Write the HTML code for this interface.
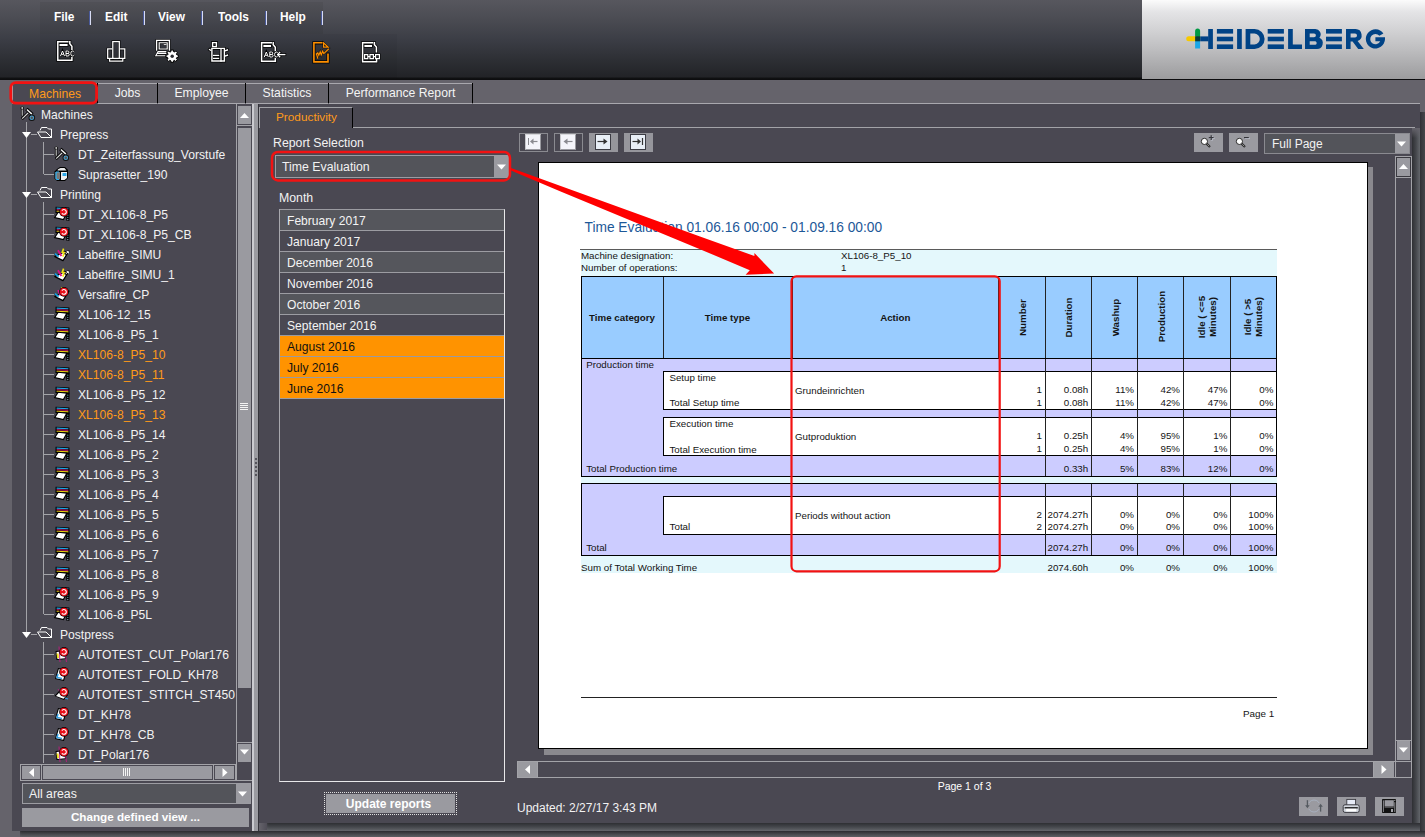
<!DOCTYPE html>
<html><head><meta charset="utf-8"><style>
*{margin:0;padding:0;box-sizing:border-box}
html,body{width:1425px;height:837px;overflow:hidden}
body{position:relative;background:#65636b;font-family:"Liberation Sans",sans-serif;font-size:12px;color:#fff}
.a{position:absolute}
.t{position:absolute;white-space:nowrap;line-height:1}
svg{position:absolute;overflow:visible}
#hdr{left:0;top:0;width:1425px;height:80px;background:linear-gradient(#57575e,#4a4b52 25%,#3b3d45 50%,#2d2f34 75%,#222327 96.2%,#101112 97.6%,#0c0c0e)}
#logo{left:1142px;top:0;width:283px;height:79px;background:linear-gradient(#fbfbfb 0%,#e4e4e6 15%,#d2d2d4 38%,#bebec0 62%,#a9a9ab 85%,#9c9c9e 100%)}
.menu{font-weight:bold;font-size:11.9px;color:#fff;top:10.6px;transform:scale(1,1.1);transform-origin:0 0}
.msep{top:11px;width:2px;height:14px;background:linear-gradient(90deg,#4a5a9a 50%,#d8dcf4 50%)}
.tab{top:83px;height:21px;background:#65636b;border-top:1px solid #a9a8ae;border-bottom:1px solid #a9a8ae;text-align:center;font-size:12.2px;line-height:19px;color:#f4f4f4}
.tsep{top:83px;width:1px;height:20px;background:#000}
.panel{background:#4a4852}
.tr{font-size:12.1px;color:#f2f2f2}
.org{color:#ff9a1a}
.ln{background:#a3a3a8}
.month{left:280px;width:224px;height:21px;border-top:1px solid #9c9ca2;font-size:12.1px;line-height:22px;padding-left:7px;color:#f4f4f4}
.m1{background:#55565c}
.m2{background:#4a4852}
.msel{background:#ff9300;color:#111;border-top-color:#9a9aa0}
.gbtn{background:#9a9aa0}
.r{position:absolute;white-space:nowrap;line-height:1;color:#141414;font-size:9.6px}
</style></head><body>
<div id="hdr" class="a"></div>
<div class="a" style="left:40px;top:2px;width:283px;height:32px;background:rgba(0,0,0,0.06)"></div>
<div class="a" style="left:40px;top:34px;width:357px;height:44px;background:rgba(0,0,0,0.04)"></div>
<div class="t menu" style="left:54px">File</div><div class="a msep" style="left:89px"></div>
<div class="t menu" style="left:105px">Edit</div><div class="a msep" style="left:142.5px"></div>
<div class="t menu" style="left:158px">View</div><div class="a msep" style="left:201px"></div>
<div class="t menu" style="left:218px">Tools</div><div class="a msep" style="left:265px"></div>
<div class="t menu" style="left:280px">Help</div><div class="a msep" style="left:321px"></div>
<svg style="left:0;top:0" width="400" height="80"><path d="M67.8 41.7 H57.8 V60.3 H71.9 V57 M69.8 41.7 V43.8 L71.9 46.2 V49.8" stroke="#000" stroke-width="3.1" fill="none" stroke-linejoin="miter" stroke-linecap="square" opacity="0.85"/><path d="M60.5 45 H66.6" stroke="#000" stroke-width="3.6" fill="none" stroke-linejoin="miter" stroke-linecap="square" opacity="0.85"/><path d="M67.8 41.7 H57.8 V60.3 H71.9 V57 M69.8 41.7 V43.8 L71.9 46.2 V49.8" stroke="#fff" stroke-width="1.5" fill="none" stroke-linejoin="miter" stroke-linecap="square"/><path d="M60.5 45 H66.6" stroke="#fff" stroke-width="2" fill="none" stroke-linejoin="miter" stroke-linecap="square"/><path d="M60.5 56 L62.5 51 L64.5 56 M61.4 54.3 H63.6 M66 51 V56 H68 Q69.3 56 69.3 54.7 Q69.3 53.5 68 53.5 H66 M66 51 H67.8 Q69 51 69 52.2 Q69 53.5 67.8 53.5 M74.2 51.8 Q73.4 51 72.3 51 Q70.8 51 70.8 53.5 Q70.8 56 72.3 56 Q73.4 56 74.2 55.2" stroke="#000" stroke-width="2.2" fill="none"/><path d="M60.5 56 L62.5 51 L64.5 56 M61.4 54.3 H63.6 M66 51 V56 H68 Q69.3 56 69.3 54.7 Q69.3 53.5 68 53.5 H66 M66 51 H67.8 Q69 51 69 52.2 Q69 53.5 67.8 53.5 M74.2 51.8 Q73.4 51 72.3 51 Q70.8 51 70.8 53.5 Q70.8 56 72.3 56 Q73.4 56 74.2 55.2" stroke="#fff" stroke-width="1" fill="none"/><path d="M112.8 58.4 V41.6 H119.3 V58.4" stroke="#000" stroke-width="2.5" fill="none" stroke-linejoin="miter" stroke-linecap="square" opacity="0.85"/><path d="M111.4 48.9 H107.7 V58.4 H124.8 V48.9 H120.8" stroke="#000" stroke-width="2.5" fill="none" stroke-linejoin="miter" stroke-linecap="square" opacity="0.85"/><path d="M109.6 59 V61.1 H122.8 V59" stroke="#000" stroke-width="2.2" fill="none" stroke-linejoin="miter" stroke-linecap="square" opacity="0.85"/><path d="M112.8 58.4 V41.6 H119.3 V58.4" stroke="#fff" stroke-width="1.3" fill="none" stroke-linejoin="miter" stroke-linecap="square"/><path d="M111.4 48.9 H107.7 V58.4 H124.8 V48.9 H120.8" stroke="#fff" stroke-width="1.3" fill="none" stroke-linejoin="miter" stroke-linecap="square"/><path d="M109.6 59 V61.1 H122.8 V59" stroke="#fff" stroke-width="1.2" fill="none" stroke-linejoin="miter" stroke-linecap="square"/><path d="M156.6 50 V40.4 H169.4 V50" stroke="#000" stroke-width="2.5" fill="none" stroke-linejoin="miter" stroke-linecap="square" opacity="0.85"/><path d="M159.2 42.8 H167.2 V49 H159.2 Z" stroke="#000" stroke-width="2.1" fill="none" stroke-linejoin="miter" stroke-linecap="square" opacity="0.85"/><path d="M164.2 44.6 H166" stroke="#000" stroke-width="1.5" fill="none" stroke-linejoin="miter" stroke-linecap="square" opacity="0.85"/><path d="M158.4 51.6 H165.8 M157.4 53.4 H165.8 M158 51.8 L155.8 55.8 H165" stroke="#000" stroke-width="2.1" fill="none" stroke-linejoin="miter" stroke-linecap="square" opacity="0.85"/><path d="M156.6 50 V40.4 H169.4 V50" stroke="#fff" stroke-width="1.3" fill="none" stroke-linejoin="miter" stroke-linecap="square"/><path d="M159.2 42.8 H167.2 V49 H159.2 Z" stroke="#fff" stroke-width="1.1" fill="none" stroke-linejoin="miter" stroke-linecap="square"/><path d="M164.2 44.6 H166" stroke="#fff" stroke-width="0.9" fill="none" stroke-linejoin="miter" stroke-linecap="square"/><path d="M158.4 51.6 H165.8 M157.4 53.4 H165.8 M158 51.8 L155.8 55.8 H165" stroke="#fff" stroke-width="1.1" fill="none" stroke-linejoin="miter" stroke-linecap="square"/><polygon points="176.45,54.45 176.96,55.04 178.35,54.85 178.35,57.55 176.96,57.36 176.45,57.95 176.45,57.97 176.39,58.74 177.51,59.60 175.60,61.51 174.74,60.39 173.97,60.45 173.95,60.45 173.36,60.96 173.55,62.35 170.85,62.35 171.04,60.96 170.45,60.45 170.43,60.45 169.66,60.39 168.80,61.51 166.89,59.60 168.01,58.74 167.95,57.97 167.95,57.95 167.44,57.36 166.05,57.55 166.05,54.85 167.44,55.04 167.95,54.45 167.95,54.43 168.01,53.66 166.89,52.80 168.80,50.89 169.66,52.01 170.43,51.95 170.45,51.95 171.04,51.44 170.85,50.05 173.55,50.05 173.36,51.44 173.95,51.95 173.97,51.95 174.74,52.01 175.60,50.89 177.51,52.80 176.39,53.66 176.45,54.43" fill="#fff" stroke="#000" stroke-width="1" opacity="1"/><circle cx="172.2" cy="56.2" r="1.7" fill="#2a2b30"/><path d="M212.6 42.6 H216.4 V46.6 H212.6 Z" stroke="#000" stroke-width="3.0" fill="none" stroke-linejoin="miter" stroke-linecap="square" opacity="0.85"/><path d="M211.9 48.4 H224.4 V61 H211.9 Z" stroke="#000" stroke-width="3.0" fill="none" stroke-linejoin="miter" stroke-linecap="square" opacity="0.85"/><path d="M221 48.6 V61" stroke="#000" stroke-width="2.9000000000000004" fill="none" stroke-linejoin="miter" stroke-linecap="square" opacity="0.85"/><path d="M213.6 55.4 H218.6 M213.6 58.4 H218.6" stroke="#000" stroke-width="2.8" fill="none" stroke-linejoin="miter" stroke-linecap="square" opacity="0.85"/><path d="M225.6 50.6 L227.4 50 M225.6 55.8 L227.4 55.2" stroke="#000" stroke-width="3.0" fill="none" stroke-linejoin="miter" stroke-linecap="square" opacity="0.85"/><path d="M210.6 50.2 L209.6 49.6" stroke="#000" stroke-width="3.0" fill="none" stroke-linejoin="miter" stroke-linecap="square" opacity="0.85"/><path d="M212.6 42.6 H216.4 V46.6 H212.6 Z" stroke="#fff" stroke-width="1.4" fill="none" stroke-linejoin="miter" stroke-linecap="square"/><path d="M211.9 48.4 H224.4 V61 H211.9 Z" stroke="#fff" stroke-width="1.4" fill="none" stroke-linejoin="miter" stroke-linecap="square"/><path d="M221 48.6 V61" stroke="#fff" stroke-width="1.3" fill="none" stroke-linejoin="miter" stroke-linecap="square"/><path d="M213.6 55.4 H218.6 M213.6 58.4 H218.6" stroke="#fff" stroke-width="1.2" fill="none" stroke-linejoin="miter" stroke-linecap="square"/><path d="M225.6 50.6 L227.4 50 M225.6 55.8 L227.4 55.2" stroke="#fff" stroke-width="1.4" fill="none" stroke-linejoin="miter" stroke-linecap="square"/><path d="M210.6 50.2 L209.6 49.6" stroke="#fff" stroke-width="1.4" fill="none" stroke-linejoin="miter" stroke-linecap="square"/><path d="M271.2 42.7 H261.6 V61.3 H275.3 V58 M273.2 42.7 V44.8 L275.3 47.2 V50.8" stroke="#000" stroke-width="3.1" fill="none" stroke-linejoin="miter" stroke-linecap="square" opacity="0.85"/><path d="M264.4 46 H270" stroke="#000" stroke-width="3.6" fill="none" stroke-linejoin="miter" stroke-linecap="square" opacity="0.85"/><path d="M271.2 42.7 H261.6 V61.3 H275.3 V58 M273.2 42.7 V44.8 L275.3 47.2 V50.8" stroke="#fff" stroke-width="1.5" fill="none" stroke-linejoin="miter" stroke-linecap="square"/><path d="M264.4 46 H270" stroke="#fff" stroke-width="2" fill="none" stroke-linejoin="miter" stroke-linecap="square"/><path d="M264.3 57 L266.3 52 L268.3 57 M265.2 55.3 H267.40000000000003 M269.8 52 V57 H271.8 Q273.1 57 273.1 55.7 Q273.1 54.5 271.8 54.5 H269.8 M269.8 52 H271.6 Q272.8 52 272.8 53.2 Q272.8 54.5 271.6 54.5 M278.0 52.8 Q277.20000000000005 52 276.1 52 Q274.6 52 274.6 54.5 Q274.6 57 276.1 57 Q277.20000000000005 57 278.0 56.2" stroke="#000" stroke-width="2.2" fill="none"/><path d="M264.3 57 L266.3 52 L268.3 57 M265.2 55.3 H267.40000000000003 M269.8 52 V57 H271.8 Q273.1 57 273.1 55.7 Q273.1 54.5 271.8 54.5 H269.8 M269.8 52 H271.6 Q272.8 52 272.8 53.2 Q272.8 54.5 271.6 54.5 M278.0 52.8 Q277.20000000000005 52 276.1 52 Q274.6 52 274.6 54.5 Q274.6 57 276.1 57 Q277.20000000000005 57 278.0 56.2" stroke="#fff" stroke-width="1" fill="none"/><path d="M277.6 54.6 H284.8" stroke="#000" stroke-width="2.9000000000000004" fill="none" stroke-linejoin="miter" stroke-linecap="square" opacity="0.85"/><path d="M279.8 52.4 L277.6 54.6 L279.8 56.8" stroke="#000" stroke-width="2.8" fill="none" stroke-linejoin="miter" stroke-linecap="square" opacity="0.85"/><path d="M277.6 54.6 H284.8" stroke="#fff" stroke-width="1.3" fill="none" stroke-linejoin="miter" stroke-linecap="square"/><path d="M279.8 52.4 L277.6 54.6 L279.8 56.8" stroke="#fff" stroke-width="1.2" fill="none" stroke-linejoin="miter" stroke-linecap="square"/><path d="M321.8 42.8 H313.9 V61.9 H328 V54.2" stroke="#000" stroke-width="3.2" fill="none" stroke-linejoin="miter" stroke-linecap="square" opacity="0.85"/><path d="M323.6 42.8 V47.2 H328.2 Z" stroke="#000" stroke-width="2.0" fill="none" stroke-linejoin="miter" stroke-linecap="square" opacity="0.85"/><path d="M316.4 53.8 L317.8 58.2 M316.4 54.2 L317.8 52.8 L318.8 55.4 L320.2 51.8 L321.2 55 L322.6 51.2 L323.8 53.6 L328.4 49.2" stroke="#000" stroke-width="1.7999999999999998" fill="none" stroke-linejoin="miter" stroke-linecap="square" opacity="0.85"/><path d="M321.8 42.8 H313.9 V61.9 H328 V54.2" stroke="#ff9000" stroke-width="1.6" fill="none" stroke-linejoin="miter" stroke-linecap="square"/><path d="M323.6 42.8 V47.2 H328.2 Z" stroke="#ff9000" stroke-width="1.2" fill="none" stroke-linejoin="miter" stroke-linecap="square"/><path d="M316.4 53.8 L317.8 58.2 M316.4 54.2 L317.8 52.8 L318.8 55.4 L320.2 51.8 L321.2 55 L322.6 51.2 L323.8 53.6 L328.4 49.2" stroke="#ff9000" stroke-width="1.2" fill="none" stroke-linejoin="miter" stroke-linecap="square"/><path d="M372.4 42.8 H362.6 V61.8 H376.6 V59.6 M374.4 42.8 V44.7 L376.4 47.1 V51.8" stroke="#000" stroke-width="3.1" fill="none" stroke-linejoin="miter" stroke-linecap="square" opacity="0.85"/><path d="M365.4 46 H371" stroke="#000" stroke-width="3.6" fill="none" stroke-linejoin="miter" stroke-linecap="square" opacity="0.85"/><path d="M364.6 54.6 H367.8 V58.6 H364.6 Z M370 54.6 H373.4 V58.6 H370 Z M375.6 54.6 H379.4 V58.6 H375.6 Z M367.8 56.6 H370 M373.4 56.6 H375.6" stroke="#000" stroke-width="2.4" fill="none" stroke-linejoin="miter" stroke-linecap="square" opacity="0.85"/><path d="M372.4 42.8 H362.6 V61.8 H376.6 V59.6 M374.4 42.8 V44.7 L376.4 47.1 V51.8" stroke="#fff" stroke-width="1.5" fill="none" stroke-linejoin="miter" stroke-linecap="square"/><path d="M365.4 46 H371" stroke="#fff" stroke-width="2" fill="none" stroke-linejoin="miter" stroke-linecap="square"/><path d="M364.6 54.6 H367.8 V58.6 H364.6 Z M370 54.6 H373.4 V58.6 H370 Z M375.6 54.6 H379.4 V58.6 H375.6 Z M367.8 56.6 H370 M373.4 56.6 H375.6" stroke="#fff" stroke-width="1.2" fill="none" stroke-linejoin="miter" stroke-linecap="square"/></svg>
<div id="logo" class="a"></div>
<svg style="left:1142px;top:0" width="283" height="79"><g transform="translate(-1142,0)" fill="#004386">
<rect x="1200.2" y="36.4" width="8.4" height="4.9"/>
<rect x="1208.2" y="29" width="4.7" height="20"/>
<rect x="1216.9" y="29" width="16.2" height="4.6"/><rect x="1216.9" y="36.7" width="16.2" height="4.6"/><rect x="1216.9" y="44.4" width="16.2" height="4.6"/>
<rect x="1237.1" y="29" width="4.7" height="20"/>
<path fill-rule="evenodd" d="M1245.6 29 H1254.6 A10 10 0 0 1 1254.6 49 H1245.6 Z M1250.3 33.6 H1254.4 A5.4 5.4 0 0 1 1254.4 44.4 H1250.3 Z"/>
<rect x="1267.7" y="29" width="16.2" height="4.6"/><rect x="1267.7" y="36.7" width="16.2" height="4.6"/><rect x="1267.7" y="44.4" width="16.2" height="4.6"/>
<path d="M1288.1 29 H1292.8 V44.4 H1302 V49 H1288.1 Z"/>
<path fill-rule="evenodd" d="M1305 29 H1314.6 A5.4 5.4 0 0 1 1319.4 37.8 A5.9 5.9 0 0 1 1316.4 49 H1305 Z M1309.7 33.4 H1314 A1.9 1.9 0 0 1 1314 37.2 H1309.7 Z M1309.7 41.2 H1315.4 A1.9 1.9 0 0 1 1315.4 44.8 H1309.7 Z"/>
<rect x="1326" y="29" width="15.9" height="4.6"/><rect x="1326" y="36.7" width="15.9" height="4.6"/><rect x="1326" y="44.4" width="15.9" height="4.6"/>
<path fill-rule="evenodd" d="M1346 29 H1355.6 A6.2 6.2 0 0 1 1357.6 41 L1363.8 49 H1358.2 L1352.6 41.6 H1350.6 V49 H1346 Z M1350.6 33.4 H1355 A1.9 1.9 0 0 1 1355 37.4 H1350.6 Z"/>
<path d="M1383.4 33.6 A9.6 9.6 0 1 0 1385 39.2 V37.2 H1375.4 V41.2 H1380.2 A5.2 5.2 0 1 1 1379.4 35.8 Z"/>
</g>
<g transform="translate(-1142,0)">
<path d="M1197.6 31 V38" stroke="#009a44" stroke-width="5" stroke-linecap="round"/>
<path d="M1197.6 41 V48.5" stroke="#1aa7e8" stroke-width="5"/>
<path d="M1188.7 38.8 H1195" stroke="#f7c900" stroke-width="5" stroke-linecap="round"/>
<rect x="1195.1" y="36.3" width="5" height="5" fill="#0d3a3a"/>
</g></svg>
<div class="a tab" style="left:98px;width:59px">Jobs</div>
<div class="a tab" style="left:158px;width:87px">Employee</div>
<div class="a tab" style="left:246px;width:82px">Statistics</div>
<div class="a tab" style="left:329px;width:143px">Performance Report</div>
<div class="a" style="left:473px;top:103px;width:947px;height:1px;background:#a9a8ae"></div>
<div class="a tsep" style="left:97px"></div>
<div class="a tsep" style="left:157px"></div>
<div class="a tsep" style="left:245px"></div>
<div class="a tsep" style="left:328px"></div>
<div class="a tsep" style="left:472px"></div>
<div class="a" style="left:12px;top:83px;width:85px;height:21px;background:#4a4852;border-top:1px solid #a9a8ae;border-left:1px solid #a9a8ae"></div>
<div class="t org" style="left:29px;top:88px;font-size:12.2px">Machines</div>
<div class="a panel" style="left:12px;top:104px;width:246px;height:727px"></div>
<svg width="0" height="0" style="left:0;top:0"><defs>
<g id="i-tool">
 <path d="M2.2 1.8 V10.2" stroke="#000" stroke-width="2.6"/>
 <circle cx="2.2" cy="2" r="1.4" fill="#ddd" stroke="#000" stroke-width="0.8"/>
 <path d="M2.2 3.5 V9.8" stroke="#e0e0e0" stroke-width="1"/>
 <path d="M1.8 13 L9 6" stroke="#000" stroke-width="3"/>
 <path d="M2.2 12.6 L8.8 6.2" stroke="#d8d8d8" stroke-width="1.2"/>
 <path d="M6.4 3 L12.4 8.6" stroke="#000" stroke-width="3.4"/>
 <path d="M6.9 3.5 L11.9 8.1" stroke="#eee" stroke-width="1.5"/>
 <circle cx="11.8" cy="11.8" r="3.3" fill="#111"/>
 <circle cx="11.8" cy="11.8" r="2.3" fill="#4aa0d0"/>
 <circle cx="11.8" cy="11.8" r="1.3" fill="#555"/>
</g>
<g id="i-fold">
 <path d="M3 3.5 L4.5 0.5 H10 L11.5 2 H14.5 V10.5 H4" fill="none" stroke="#fff" stroke-width="1"/>
 <path d="M0.5 5 H9 L14.5 10.5 H4 Z" fill="none" stroke="#fff" stroke-width="1"/>
</g>
<g id="i-supra">
 <path d="M3 3 L6 1 H11 L14 4 V12 L11 15 H3 L0.5 12.5 V5.5 Z" fill="#000"/>
 <path d="M4 3.2 L6.5 2 H10.5 L12.5 4.5 H3.5 Z" fill="#e8e8e8"/>
 <path d="M1.5 6 H6 V13.5 H2.5 L1.5 12.5 Z" fill="#777"/>
 <path d="M2 6 H5 M2 6 V12.5 L3 13.5 H5" stroke="#30b0f0" stroke-width="1.2" fill="none"/>
 <path d="M7 6 H13 V12 L10.5 14 H7 Z" fill="#f0f0f0"/>
 <path d="M8.5 7 H12.5 V10 H8.5 Z" fill="#30a8e8"/>
</g>
<g id="i-press">
 <path d="M1.6 0.8 L15.4 1.6 L15.6 7.4 L1.4 7 Z" fill="#000"/>
 <path d="M2.6 2.1 L14.4 2.8" stroke="#1aa8e8" stroke-width="1.1"/>
 <path d="M2.6 3.7 L14.4 4.3" stroke="#e0107a" stroke-width="1.1"/>
 <path d="M2.6 5.3 L14.4 5.9" stroke="#e8d010" stroke-width="1.1"/>
 <path d="M12 6.8 L15.6 7 L15.4 14.8 L12.4 14.8 Z" fill="#000"/>
 <circle cx="13.8" cy="9.2" r="0.6" fill="#6a9aa0"/><circle cx="13.8" cy="11.4" r="0.6" fill="#6a9aa0"/><circle cx="13.8" cy="13.6" r="0.7" fill="#9ac"/>
 <path d="M4.2 6.2 L12.8 7.2 L9.4 13.6 L0.6 11.6 Z" fill="#fff" stroke="#000" stroke-width="1.1"/>
</g>
<g id="i-badge">
 <circle cx="10" cy="5.9" r="4.8" fill="#000"/>
 <circle cx="10" cy="5.9" r="4.1" fill="#e8101a"/>
 <path d="M7.9 4.6 A2.4 2.4 0 1 1 7.9 7.2" fill="none" stroke="#fff" stroke-width="1.1"/>
</g>
<g id="i-label">
 <path d="M0.8 10.6 L9.5 6.2 L15 5 L9 14.6 Z" fill="#fff" stroke="#000" stroke-width="1.2" stroke-linejoin="round"/>
 <path d="M1 7.6 L4.6 10.6" stroke="#12a0e0" stroke-width="1.8"/>
 <path d="M4 4.2 L7.4 10" stroke="#e0108a" stroke-width="1.8"/>
 <path d="M9.6 2.6 L8.2 6.4 L10.4 6.6 L8.8 10.6" stroke="#f0e010" stroke-width="1.6" fill="none"/>
 <path d="M11 8.6 L14.6 5.6" stroke="#000" stroke-width="2.4"/>
 <path d="M11.6 8 L14.2 5.8 M12.6 5.6 L14.4 5.6 L14.4 7.4" stroke="#fff" stroke-width="1" fill="none"/>
</g>
<g id="i-versa">
 <path d="M0.8 10.6 L9.5 6.2 L15 5 L9 14.6 Z" fill="#fff" stroke="#000" stroke-width="1.2" stroke-linejoin="round"/>
 <path d="M1 7.6 L4.6 10.6" stroke="#12a0e0" stroke-width="1.8"/>
 <path d="M4 4.2 L6.4 9.4" stroke="#e0108a" stroke-width="1.6"/>
 <path d="M7 1.6 L9 1.6" stroke="#e8d010" stroke-width="1"/>
</g>
<g id="i-cut">
 <path d="M1.5 5 L11 4 L12 13 L2.5 14 Z" fill="#000"/>
 <path d="M2.5 6 L10 5.2 L11 12.2 L3.5 13 Z" fill="#fff"/>
 <path d="M3.5 7.5 L4 12" stroke="#f0e020" stroke-width="2"/>
 <path d="M5 0.5 L6 16 M10.5 4 L12.5 16" stroke="#c01880" stroke-width="0.9"/>
</g>
<g id="i-fold2">
 <path d="M4 2 L13 4 L10 15 L1 13 Z" fill="#000"/>
 <path d="M4.8 3.2 L11.8 4.8 L9.2 13.8 L2.2 12.2 Z" fill="#fff"/>
 <path d="M4 8 L3 11.5 L8 12.5" stroke="#3aa0e0" stroke-width="1.6" fill="none"/>
</g>
<g id="i-stitch">
 <path d="M0.5 10 L5 5 L14 9 L10 14 Z" fill="#000"/>
 <path d="M2 10 L5.5 6.3 L12.5 9.3 L9.5 12.8 Z" fill="#fff"/>
 <path d="M11 12 L14 13" stroke="#3aa0e0" stroke-width="1.2"/>
 <path d="M4 3 L6 6" stroke="#c01880" stroke-width="0.8"/>
</g>
</defs></svg>
<div class="a" style="left:12px;top:104px;width:224px;height:659px;overflow:hidden">
<div class="a ln" style="left:14px;top:18px;width:1px;height:512px"></div><div class="a ln" style="left:31px;top:38px;width:1px;height:32px"></div><div class="a ln" style="left:31px;top:98px;width:1px;height:412px"></div><div class="a ln" style="left:31px;top:538px;width:1px;height:130px"></div><svg style="left:8px;top:2px" width="16" height="16"><use href="#i-tool"/></svg><div class="t tr" style="left:29px;top:5px">Machines</div>
<div class="a ln" style="left:19px;top:30px;width:6px;height:1px"></div><svg style="left:10px;top:28px" width="10" height="7"><path d="M0 0 L9 0 L4.5 6 Z" fill="#fff"/></svg><svg style="left:25px;top:23px" width="16" height="14"><use href="#i-fold"/></svg><div class="t tr" style="left:48px;top:25px">Prepress</div>
<div class="a ln" style="left:32px;top:50px;width:10px;height:1px"></div><svg style="left:42px;top:42px" width="16" height="16"><use href="#i-tool"/></svg><div class="t tr" style="left:66px;top:45px">DT_Zeiterfassung_Vorstufe</div>
<div class="a ln" style="left:32px;top:70px;width:10px;height:1px"></div><svg style="left:42px;top:62px" width="16" height="16"><use href="#i-supra"/></svg><div class="t tr" style="left:66px;top:65px">Suprasetter_190</div>
<div class="a ln" style="left:19px;top:90px;width:6px;height:1px"></div><svg style="left:10px;top:88px" width="10" height="7"><path d="M0 0 L9 0 L4.5 6 Z" fill="#fff"/></svg><svg style="left:25px;top:83px" width="16" height="14"><use href="#i-fold"/></svg><div class="t tr" style="left:48px;top:85px">Printing</div>
<div class="a ln" style="left:32px;top:110px;width:10px;height:1px"></div><svg style="left:42px;top:102px" width="16" height="16"><use href="#i-press"/><use href="#i-badge"/></svg><div class="t tr" style="left:66px;top:105px">DT_XL106-8_P5</div>
<div class="a ln" style="left:32px;top:130px;width:10px;height:1px"></div><svg style="left:42px;top:122px" width="16" height="16"><use href="#i-press"/><use href="#i-badge"/></svg><div class="t tr" style="left:66px;top:125px">DT_XL106-8_P5_CB</div>
<div class="a ln" style="left:32px;top:150px;width:10px;height:1px"></div><svg style="left:42px;top:142px" width="16" height="16"><use href="#i-label"/></svg><div class="t tr" style="left:66px;top:145px">Labelfire_SIMU</div>
<div class="a ln" style="left:32px;top:170px;width:10px;height:1px"></div><svg style="left:42px;top:162px" width="16" height="16"><use href="#i-label"/></svg><div class="t tr" style="left:66px;top:165px">Labelfire_SIMU_1</div>
<div class="a ln" style="left:32px;top:190px;width:10px;height:1px"></div><svg style="left:42px;top:182px" width="16" height="16"><use href="#i-versa"/><use href="#i-badge"/></svg><div class="t tr" style="left:66px;top:185px">Versafire_CP</div>
<div class="a ln" style="left:32px;top:210px;width:10px;height:1px"></div><svg style="left:42px;top:202px" width="16" height="16"><use href="#i-press"/></svg><div class="t tr" style="left:66px;top:205px">XL106-12_15</div>
<div class="a ln" style="left:32px;top:230px;width:10px;height:1px"></div><svg style="left:42px;top:222px" width="16" height="16"><use href="#i-press"/></svg><div class="t tr" style="left:66px;top:225px">XL106-8_P5_1</div>
<div class="a ln" style="left:32px;top:250px;width:10px;height:1px"></div><svg style="left:42px;top:242px" width="16" height="16"><use href="#i-press"/></svg><div class="t tr org" style="left:66px;top:245px">XL106-8_P5_10</div>
<div class="a ln" style="left:32px;top:270px;width:10px;height:1px"></div><svg style="left:42px;top:262px" width="16" height="16"><use href="#i-press"/></svg><div class="t tr org" style="left:66px;top:265px">XL106-8_P5_11</div>
<div class="a ln" style="left:32px;top:290px;width:10px;height:1px"></div><svg style="left:42px;top:282px" width="16" height="16"><use href="#i-press"/></svg><div class="t tr" style="left:66px;top:285px">XL106-8_P5_12</div>
<div class="a ln" style="left:32px;top:310px;width:10px;height:1px"></div><svg style="left:42px;top:302px" width="16" height="16"><use href="#i-press"/></svg><div class="t tr org" style="left:66px;top:305px">XL106-8_P5_13</div>
<div class="a ln" style="left:32px;top:330px;width:10px;height:1px"></div><svg style="left:42px;top:322px" width="16" height="16"><use href="#i-press"/></svg><div class="t tr" style="left:66px;top:325px">XL106-8_P5_14</div>
<div class="a ln" style="left:32px;top:350px;width:10px;height:1px"></div><svg style="left:42px;top:342px" width="16" height="16"><use href="#i-press"/></svg><div class="t tr" style="left:66px;top:345px">XL106-8_P5_2</div>
<div class="a ln" style="left:32px;top:370px;width:10px;height:1px"></div><svg style="left:42px;top:362px" width="16" height="16"><use href="#i-press"/></svg><div class="t tr" style="left:66px;top:365px">XL106-8_P5_3</div>
<div class="a ln" style="left:32px;top:390px;width:10px;height:1px"></div><svg style="left:42px;top:382px" width="16" height="16"><use href="#i-press"/></svg><div class="t tr" style="left:66px;top:385px">XL106-8_P5_4</div>
<div class="a ln" style="left:32px;top:410px;width:10px;height:1px"></div><svg style="left:42px;top:402px" width="16" height="16"><use href="#i-press"/></svg><div class="t tr" style="left:66px;top:405px">XL106-8_P5_5</div>
<div class="a ln" style="left:32px;top:430px;width:10px;height:1px"></div><svg style="left:42px;top:422px" width="16" height="16"><use href="#i-press"/></svg><div class="t tr" style="left:66px;top:425px">XL106-8_P5_6</div>
<div class="a ln" style="left:32px;top:450px;width:10px;height:1px"></div><svg style="left:42px;top:442px" width="16" height="16"><use href="#i-press"/></svg><div class="t tr" style="left:66px;top:445px">XL106-8_P5_7</div>
<div class="a ln" style="left:32px;top:470px;width:10px;height:1px"></div><svg style="left:42px;top:462px" width="16" height="16"><use href="#i-press"/></svg><div class="t tr" style="left:66px;top:465px">XL106-8_P5_8</div>
<div class="a ln" style="left:32px;top:490px;width:10px;height:1px"></div><svg style="left:42px;top:482px" width="16" height="16"><use href="#i-press"/><use href="#i-badge"/></svg><div class="t tr" style="left:66px;top:485px">XL106-8_P5_9</div>
<div class="a ln" style="left:32px;top:510px;width:10px;height:1px"></div><svg style="left:42px;top:502px" width="16" height="16"><use href="#i-press"/><use href="#i-badge"/></svg><div class="t tr" style="left:66px;top:505px">XL106-8_P5L</div>
<div class="a ln" style="left:19px;top:530px;width:6px;height:1px"></div><svg style="left:10px;top:528px" width="10" height="7"><path d="M0 0 L9 0 L4.5 6 Z" fill="#fff"/></svg><svg style="left:25px;top:523px" width="16" height="14"><use href="#i-fold"/></svg><div class="t tr" style="left:48px;top:525px">Postpress</div>
<div class="a ln" style="left:32px;top:550px;width:10px;height:1px"></div><svg style="left:42px;top:542px" width="16" height="16"><use href="#i-cut"/><use href="#i-badge"/></svg><div class="t tr" style="left:66px;top:545px">AUTOTEST_CUT_Polar176</div>
<div class="a ln" style="left:32px;top:570px;width:10px;height:1px"></div><svg style="left:42px;top:562px" width="16" height="16"><use href="#i-fold2"/><use href="#i-badge"/></svg><div class="t tr" style="left:66px;top:565px">AUTOTEST_FOLD_KH78</div>
<div class="a ln" style="left:32px;top:590px;width:10px;height:1px"></div><svg style="left:42px;top:582px" width="16" height="16"><use href="#i-stitch"/><use href="#i-badge"/></svg><div class="t tr" style="left:66px;top:585px">AUTOTEST_STITCH_ST450</div>
<div class="a ln" style="left:32px;top:610px;width:10px;height:1px"></div><svg style="left:42px;top:602px" width="16" height="16"><use href="#i-fold2"/><use href="#i-badge"/></svg><div class="t tr" style="left:66px;top:605px">DT_KH78</div>
<div class="a ln" style="left:32px;top:630px;width:10px;height:1px"></div><svg style="left:42px;top:622px" width="16" height="16"><use href="#i-fold2"/><use href="#i-badge"/></svg><div class="t tr" style="left:66px;top:625px">DT_KH78_CB</div>
<div class="a ln" style="left:32px;top:650px;width:10px;height:1px"></div><svg style="left:42px;top:642px" width="16" height="16"><use href="#i-cut"/><use href="#i-badge"/></svg><div class="t tr" style="left:66px;top:645px">DT_Polar176</div>
</div>
<div class="a" style="left:236px;top:104px;width:1px;height:659px;background:#a3a3a8"></div>
<div class="a" style="left:237px;top:104px;width:15px;height:659px;background:#4a4852"></div>
<div class="a gbtn" style="left:238px;top:106px;width:13px;height:18px"></div>
<svg style="left:240px;top:112px" width="10" height="7"><path d="M0 6 L9 6 L4.5 1 Z" fill="#fff"/></svg>
<div class="a" style="left:237px;top:125px;width:15px;height:1px;background:#a3a3a8"></div>
<div class="a gbtn" style="left:238px;top:128px;width:13px;height:560px"></div>
<div class="a" style="left:237px;top:742px;width:15px;height:1px;background:#a3a3a8"></div>
<div class="a gbtn" style="left:238px;top:744px;width:13px;height:18px"></div>
<svg style="left:240px;top:749px" width="10" height="7"><path d="M0 0.5 L9 0.5 L4.5 5.5 Z" fill="#fff"/></svg>
<div class="a" style="left:252px;top:104px;width:2px;height:727px;background:#cbcbd0"></div>
<div class="a" style="left:254px;top:104px;width:4px;height:727px;background:#9a9aa0"></div>
<div class="a" style="left:258px;top:104px;width:1px;height:727px;background:#34333a"></div>
<div class="a" style="left:240px;top:403px;width:8px;height:1px;background:#f4f4f4"></div><div class="a" style="left:240px;top:405px;width:8px;height:1px;background:#f4f4f4"></div><div class="a" style="left:240px;top:407px;width:8px;height:1px;background:#f4f4f4"></div><div class="a" style="left:240px;top:409px;width:8px;height:1px;background:#f4f4f4"></div><div class="a" style="left:255px;top:458px;width:2px;height:2px;background:#55545c"></div><div class="a" style="left:255px;top:462px;width:2px;height:2px;background:#55545c"></div><div class="a" style="left:255px;top:466px;width:2px;height:2px;background:#55545c"></div><div class="a" style="left:255px;top:470px;width:2px;height:2px;background:#55545c"></div><div class="a" style="left:255px;top:474px;width:2px;height:2px;background:#55545c"></div>
<div class="a" style="left:20px;top:764px;width:216px;height:17px;border:1px solid #a3a3a8;background:#4a4852"></div>
<div class="a gbtn" style="left:22px;top:766px;width:18px;height:13px"></div>
<svg style="left:28px;top:768px" width="7" height="10"><path d="M6 0 L6 9 L1 4.5 Z" fill="#fff"/></svg>
<div class="a" style="left:41px;top:765px;width:1px;height:15px;background:#a3a3a8"></div>
<div class="a gbtn" style="left:43px;top:766px;width:169px;height:13px"></div>
<div class="a" style="left:213px;top:765px;width:1px;height:15px;background:#a3a3a8"></div>
<div class="a gbtn" style="left:215px;top:766px;width:19px;height:13px"></div>
<svg style="left:222px;top:768px" width="7" height="10"><path d="M0.5 0 L0.5 9 L5.5 4.5 Z" fill="#fff"/></svg>
<div class="a" style="left:123px;top:768px;width:1px;height:8px;background:#f4f4f4"></div><div class="a" style="left:125px;top:768px;width:1px;height:8px;background:#f4f4f4"></div><div class="a" style="left:127px;top:768px;width:1px;height:8px;background:#f4f4f4"></div><div class="a" style="left:129px;top:768px;width:1px;height:8px;background:#f4f4f4"></div>
<div class="a" style="left:22px;top:783px;width:229px;height:21px;border:1px solid #9c9ca2;background:#53545a"></div>
<div class="a gbtn" style="left:236px;top:784px;width:14px;height:19px"></div>
<svg style="left:238px;top:791px" width="10" height="7"><path d="M0 0.5 L9 0.5 L4.5 5.5 Z" fill="#fff"/></svg>
<div class="t" style="left:29px;top:788px;font-size:12.3px;color:#f2f2f2">All areas</div>
<div class="a gbtn" style="left:22px;top:808px;width:227px;height:19px"></div>
<div class="t" style="left:22px;top:811px;width:227px;text-align:center;font-size:11.7px;font-weight:bold;color:#fff">Change defined view ...</div>
<div class="a" style="left:236px;top:763px;width:1px;height:18px;background:#a3a3a8"></div>
<div class="a" style="left:236px;top:780px;width:16px;height:1px;background:#a3a3a8"></div>
<div class="a panel" style="left:259px;top:104px;width:1161px;height:726px"></div>
<div class="a" style="left:259px;top:107px;width:94px;height:21px;border-top:1px solid #a3a3a8;border-left:1px solid #a3a3a8;border-right:1px solid #000"></div>
<div class="a" style="left:353px;top:127px;width:1062px;height:1px;background:#a3a3a8"></div>
<div class="t org" style="left:276px;top:112px;font-size:11.8px;color:#ff9a1a">Productivity</div>
<div class="t" style="left:273px;top:137px;font-size:12.3px;color:#f2f2f2;">Report Selection</div>
<div class="a" style="left:275px;top:155px;width:235px;height:23px;border:1px solid #9c9ca2;background:#53545a"></div>
<div class="a gbtn" style="left:494px;top:156px;width:15px;height:21px"></div>
<svg style="left:497px;top:164px" width="10" height="7"><path d="M0 0.5 L9 0.5 L4.5 5.5 Z" fill="#fff"/></svg>
<div class="t" style="left:282px;top:161px;font-size:12.3px;color:#f2f2f2;">Time Evaluation</div>
<div class="t" style="left:279px;top:192px;font-size:12.3px;color:#f2f2f2;">Month</div>
<div class="a" style="left:279px;top:209px;width:226px;height:573px;border:1px solid #a8a8ae;border-right-color:#e8e8ea;border-bottom-color:#e8e8ea;background:#4a4852"></div>
<div class="a month m1" style="top:209px">February 2017</div>
<div class="a month m2" style="top:230px">January 2017</div>
<div class="a month m1" style="top:251px">December 2016</div>
<div class="a month m2" style="top:272px">November 2016</div>
<div class="a month m1" style="top:293px">October 2016</div>
<div class="a month m2" style="top:314px">September 2016</div>
<div class="a month msel" style="top:335px">August 2016</div>
<div class="a month msel" style="top:356px">July 2016</div>
<div class="a month msel" style="top:377px">June 2016</div>
<div class="a" style="left:280px;top:398px;width:224px;height:1px;background:#9c9ca2"></div>
<div class="a" style="left:324px;top:792px;width:133px;height:23px;border:1px dotted #e0e0e0"></div>
<div class="a gbtn" style="left:326px;top:794px;width:129px;height:19px"></div>
<div class="t" style="left:324px;top:798px;width:129px;text-align:center;font-size:12px;font-weight:bold;color:#fff">Update reports</div>
<div class="a" style="left:1412px;top:128px;width:8px;height:703px;background:linear-gradient(90deg,#2e2f33,#45474c 50%,#63666b)"></div>
<div class="a" style="left:1412px;top:128px;width:8px;height:10px;background:linear-gradient(#65636b,rgba(101,99,107,0))"></div>
<div class="a" style="left:267px;top:823px;width:1153px;height:8px;background:linear-gradient(#2e2f33,#45474c 50%,#63666b)"></div>
<div class="a" style="left:259px;top:823px;width:10px;height:8px;background:linear-gradient(90deg,#65636b,rgba(101,99,107,0))"></div>
<div class="a" style="left:1420px;top:112px;width:5px;height:725px;background:linear-gradient(90deg,#2e2f35,#3a3a40 40%,#45474b)"></div>
<div class="a" style="left:20px;top:831px;width:1405px;height:6px;background:linear-gradient(#2a2b2f,#4a4c50 60%,#5c5e62)"></div>
<div class="a" style="left:12px;top:831px;width:10px;height:6px;background:linear-gradient(90deg,#65636b,rgba(101,99,107,0))"></div>
<div class="a" style="left:519px;top:133px;width:29px;height:19px;border:1px solid #8a8a90"></div><div class="a" style="left:525px;top:134px;width:16px;height:16px;background:#f4f4fa;border-left:1px solid #c8c8cc;border-top:1px solid #d8d8dc;border-right:1px solid #9a9aa0;border-bottom:1px solid #9a9aa0"></div><svg style="left:525px;top:133px" width="16" height="17"><path d="M3.5 5 L3.5 12" stroke="#8a8a90" stroke-width="1"/><path d="M5 8.5 L8.5 5.5 L8.5 11.5 Z" fill="#8a8a90"/><path d="M8 8.5 L12.5 8.5" stroke="#8a8a90" stroke-width="1.2"/></svg>
<div class="a" style="left:554px;top:133px;width:29px;height:19px;border:1px solid #8a8a90"></div><div class="a" style="left:560px;top:134px;width:16px;height:16px;background:#f4f4fa;border-left:1px solid #c8c8cc;border-top:1px solid #d8d8dc;border-right:1px solid #9a9aa0;border-bottom:1px solid #9a9aa0"></div><svg style="left:560px;top:133px" width="16" height="17"><path d="M3.5 8.5 L7.5 5.5 L7.5 11.5 Z" fill="#8a8a90"/><path d="M7 8.5 L12.5 8.5" stroke="#8a8a90" stroke-width="1.2"/></svg>
<div class="a" style="left:589px;top:133px;width:29px;height:19px;background:#96969c"></div><div class="a" style="left:595px;top:134px;width:16px;height:16px;background:#e8eef6;border:1px solid #3c3c44"></div><svg style="left:595px;top:133px" width="16" height="17"><path d="M12.5 8.5 L8.5 5.5 L8.5 11.5 Z" fill="#333"/><path d="M2.5 8.5 L9 8.5" stroke="#333" stroke-width="1.2"/></svg>
<div class="a" style="left:624px;top:133px;width:29px;height:19px;background:#96969c"></div><div class="a" style="left:630px;top:134px;width:16px;height:16px;background:#e8eef6;border:1px solid #3c3c44"></div><svg style="left:630px;top:133px" width="16" height="17"><path d="M12.5 5 L12.5 12" stroke="#333" stroke-width="1.2"/><path d="M11 8.5 L7.5 5.5 L7.5 11.5 Z" fill="#333"/><path d="M2.5 8.5 L8 8.5" stroke="#333" stroke-width="1.2"/></svg>
<div class="a gbtn" style="left:1194px;top:133px;width:29px;height:19px"></div>
<svg style="left:1194px;top:133px" width="29" height="19"><circle cx="10.4" cy="8.4" r="3.1" fill="#fff" stroke="#2a2a2a" stroke-width="1"/><path d="M12.6 10.6 L16 14" stroke="#2a2a2a" stroke-width="2.2"/><path d="M12.8 10.8 L15.8 13.8" stroke="#ddd" stroke-width="0.8" stroke-dasharray="1 1"/><path d="M15.6 5.4 L20.4 5.4 M18 3 L18 7.8" stroke="#c8ccd8" stroke-width="1.1"/><path d="M14.8 4.6 L19.6 4.6 M17.2 2.2 L17.2 7" stroke="#34343a" stroke-width="1.2"/></svg>
<div class="a gbtn" style="left:1229px;top:133px;width:29px;height:19px"></div>
<svg style="left:1229px;top:133px" width="29" height="19"><circle cx="10.4" cy="8.4" r="3.1" fill="#fff" stroke="#2a2a2a" stroke-width="1"/><path d="M12.6 10.6 L16 14" stroke="#2a2a2a" stroke-width="2.2"/><path d="M12.8 10.8 L15.8 13.8" stroke="#ddd" stroke-width="0.8" stroke-dasharray="1 1"/><path d="M15.8 5.4 L20.6 5.4" stroke="#c8ccd8" stroke-width="1.1"/><path d="M15 4.6 L19.8 4.6" stroke="#34343a" stroke-width="1.2"/></svg>
<div class="a" style="left:1264px;top:133px;width:146px;height:21px;border:1px solid #8a8a90;background:#53545a"></div>
<div class="a gbtn" style="left:1395px;top:134px;width:14px;height:19px"></div>
<svg style="left:1397px;top:141px" width="10" height="7"><path d="M0 0.5 L9 0.5 L4.5 5.5 Z" fill="#fff"/></svg>
<div class="t" style="left:1272px;top:138px;font-size:12px;color:#f2f2f2">Full Page</div>
<div class="a" style="left:544px;top:167px;width:829px;height:588px;background:#8a898e"></div>
<div id="page" class="a" style="left:538px;top:162px;width:830px;height:587px;background:#fff;border:1px solid #000;overflow:hidden"></div>
<div class="a" style="left:1395px;top:156px;width:17px;height:606px;border:1px solid #a3a3a8;background:#4a4852"></div>
<div class="a" style="left:1396px;top:157px;width:15px;height:20px;border:1px solid #3a3940;background:#9a9aa0"></div>
<svg style="left:1399px;top:163px" width="10" height="7"><path d="M0 6 L9 6 L4.5 1 Z" fill="#fff"/></svg>
<div class="a" style="left:1396px;top:177px;width:15px;height:1px;background:#a3a3a8"></div>
<div class="a" style="left:1396px;top:740px;width:15px;height:1px;background:#a3a3a8"></div>
<div class="a gbtn" style="left:1397px;top:741px;width:13px;height:19px"></div>
<svg style="left:1399px;top:747px" width="10" height="7"><path d="M0 0.5 L9 0.5 L4.5 5.5 Z" fill="#fff"/></svg>
<div class="a" style="left:517px;top:761px;width:879px;height:17px;border:1px solid #a3a3a8;background:#4a4852"></div>
<div class="a gbtn" style="left:518px;top:762px;width:19px;height:15px"></div>
<svg style="left:524px;top:765px" width="7" height="10"><path d="M6 0 L6 9 L1 4.5 Z" fill="#fff"/></svg>
<div class="a" style="left:537px;top:762px;width:1px;height:15px;background:#a3a3a8"></div>
<div class="a" style="left:1373px;top:762px;width:1px;height:15px;background:#a3a3a8"></div>
<div class="a gbtn" style="left:1374px;top:762px;width:20px;height:15px"></div>
<svg style="left:1381px;top:765px" width="7" height="10"><path d="M0.5 0 L0.5 9 L5.5 4.5 Z" fill="#fff"/></svg>
<div class="a" style="left:1396px;top:777px;width:15px;height:1px;background:#a3a3a8"></div>
<div class="a" style="left:1411px;top:762px;width:1px;height:16px;background:#a3a3a8"></div>
<div class="t" style="left:900px;top:781px;width:129px;text-align:center;font-size:10.5px;color:#fff">Page 1 of 3</div>
<div class="t" style="left:517px;top:802px;font-size:12px;color:#f2f2f2">Updated: 2/27/17 3:43 PM</div>
<div class="a gbtn" style="left:1299px;top:797px;width:29px;height:19px"></div>
<svg style="left:1299px;top:797px" width="29" height="19"><circle cx="15" cy="9" r="6" fill="none" stroke="#aab4c4" stroke-width="0.8"/><rect x="6" y="6" width="4.5" height="6" fill="#9a9aa0"/><rect x="19.5" y="6" width="4.5" height="6" fill="#9a9aa0"/><path d="M8.4 3.2 V9.6" stroke="#555a60" stroke-width="1.3"/><path d="M6.2 8.2 L10.6 8.2 L8.4 11.2 Z" fill="#555a60"/><path d="M21.6 14.6 V8.6" stroke="#555a60" stroke-width="1.3"/><path d="M19.4 9.8 L23.8 9.8 L21.6 6.8 Z" fill="#555a60"/></svg>
<div class="a gbtn" style="left:1337px;top:797px;width:29px;height:19px"></div>
<svg style="left:1337px;top:797px" width="29" height="19"><rect x="9.8" y="2.4" width="8.8" height="7" fill="#e6eaf6" stroke="#3a3a40" stroke-width="0.9"/><rect x="6.2" y="7.8" width="16" height="7.6" rx="1.8" fill="#d4d8e0" stroke="#3a3a40" stroke-width="1"/><path d="M7.6 10.8 H20.8" stroke="#111" stroke-width="1.3"/><rect x="9.2" y="11.8" width="10" height="2.6" fill="#fff"/></svg>
<div class="a gbtn" style="left:1375px;top:797px;width:29px;height:19px"></div>
<svg style="left:1375px;top:797px" width="29" height="19"><rect x="7" y="2" width="14" height="14" rx="0.8" fill="#111"/><rect x="9.6" y="3.2" width="9.2" height="6" fill="#9a9aa0"/><path d="M8.4 3.4 V15 M19.8 5.2 V15" stroke="#a8a8ae" stroke-width="0.8"/><rect x="16" y="12" width="2" height="3" fill="#a8a8ae"/><circle cx="19.8" cy="3.6" r="0.5" fill="#ccc"/><path d="M9.6 10 H18.8" stroke="#a8a8ae" stroke-width="0.8"/></svg>
<div class="r" style="left:584.5px;top:220.96px;font-size:13.75px;color:#1d5898;">Time Evaluation 01.06.16 00:00 - 01.09.16 00:00</div><div class="a" style="left:580px;top:249px;width:697px;height:1px;background:#5a5a5a"></div><div class="a" style="left:581px;top:250px;width:696px;height:26px;background:#e4f8fc"></div><div class="r" style="left:581px;top:250.55px;font-size:9.75px;color:#141414;">Machine designation:</div><div class="r" style="left:841px;top:250.55px;font-size:9.75px;color:#141414;">XL106-8_P5_10</div><div class="r" style="left:581px;top:263.25px;font-size:9.75px;color:#141414;">Number of operations:</div><div class="r" style="left:841px;top:263.25px;font-size:9.75px;color:#141414;">1</div><div class="a" style="left:581px;top:276px;width:696px;height:83px;background:#000"></div><div class="a" style="left:582px;top:277px;width:694px;height:81px;background:#99ccff"></div><div class="a" style="left:663px;top:277px;width:1px;height:81px;background:#222"></div><div class="a" style="left:792px;top:277px;width:1px;height:81px;background:#222"></div><div class="a" style="left:998px;top:277px;width:1px;height:81px;background:#222"></div><div class="a" style="left:1045px;top:277px;width:1px;height:81px;background:#222"></div><div class="a" style="left:1091px;top:277px;width:1px;height:81px;background:#222"></div><div class="a" style="left:1137px;top:277px;width:1px;height:81px;background:#222"></div><div class="a" style="left:1183px;top:277px;width:1px;height:81px;background:#222"></div><div class="a" style="left:1230px;top:277px;width:1px;height:81px;background:#222"></div><div class="r" style="left:472px;width:300px;text-align:center;top:313.05px;font-size:9.75px;font-weight:bold;color:#141414;">Time category</div><div class="r" style="left:577.5px;width:300px;text-align:center;top:313.05px;font-size:9.75px;font-weight:bold;color:#141414;">Time type</div><div class="r" style="left:745.3px;width:300px;text-align:center;top:313.05px;font-size:9.75px;font-weight:bold;color:#141414;">Action</div><div class="r" style="left:981.5px;top:311.5px;width:80px;height:11px;line-height:11px;text-align:center;font-weight:bold;font-size:9.75px;transform:rotate(-90deg);transform-origin:50% 50%">Number</div><div class="r" style="left:1028px;top:312.0px;width:80px;height:11px;line-height:11px;text-align:center;font-weight:bold;font-size:9.75px;transform:rotate(-90deg);transform-origin:50% 50%">Duration</div><div class="r" style="left:1074.5px;top:311.5px;width:80px;height:11px;line-height:11px;text-align:center;font-weight:bold;font-size:9.75px;transform:rotate(-90deg);transform-origin:50% 50%">Washup</div><div class="r" style="left:1120.5px;top:311.2px;width:80px;height:11px;line-height:11px;text-align:center;font-weight:bold;font-size:9.75px;transform:rotate(-90deg);transform-origin:50% 50%">Production</div><div class="r" style="left:1166.5px;top:306.0px;width:80px;height:22px;line-height:11px;text-align:center;font-weight:bold;font-size:9.75px;transform:rotate(-90deg);transform-origin:50% 50%">Idle ( &lt;=5<br>Minutes)</div><div class="r" style="left:1213px;top:306.0px;width:80px;height:22px;line-height:11px;text-align:center;font-weight:bold;font-size:9.75px;transform:rotate(-90deg);transform-origin:50% 50%">Idle ( &gt;5<br>Minutes)</div><div class="a" style="left:582px;top:359px;width:694px;height:117px;background:#ccccff"></div><div class="a" style="left:663px;top:371px;width:613px;height:39px;background:#000"></div><div class="a" style="left:664px;top:372px;width:612px;height:37px;background:#fff"></div><div class="a" style="left:663px;top:417px;width:613px;height:39px;background:#000"></div><div class="a" style="left:664px;top:418px;width:612px;height:37px;background:#fff"></div><div class="a" style="left:1045px;top:359px;width:1px;height:117px;background:#222"></div><div class="a" style="left:1091px;top:359px;width:1px;height:117px;background:#222"></div><div class="a" style="left:1137px;top:359px;width:1px;height:117px;background:#222"></div><div class="a" style="left:1183px;top:359px;width:1px;height:117px;background:#222"></div><div class="a" style="left:1230px;top:359px;width:1px;height:117px;background:#222"></div><div class="a" style="left:581px;top:476px;width:696px;height:1px;background:#000"></div><div class="a" style="left:581px;top:359px;width:1px;height:117px;background:#000"></div><div class="a" style="left:1276px;top:359px;width:1px;height:117px;background:#000"></div><div class="r" style="left:586.2px;top:359.95px;font-size:9.75px;color:#141414;">Production time</div><div class="r" style="left:669.4px;top:372.75px;font-size:9.75px;color:#141414;">Setup time</div><div class="r" style="left:795px;top:385.75px;font-size:9.75px;color:#141414;">Grundeinrichten</div><div class="r" style="left:669.4px;top:398.25px;font-size:9.75px;color:#141414;">Total Setup time</div><div class="r" style="left:669.4px;top:418.95px;font-size:9.75px;color:#141414;">Execution time</div><div class="r" style="left:795px;top:431.75px;font-size:9.75px;color:#141414;">Gutproduktion</div><div class="r" style="left:669.4px;top:444.55px;font-size:9.75px;color:#141414;">Total Execution time</div><div class="r" style="left:586.2px;top:464.25px;font-size:9.75px;color:#141414;">Total Production time</div><div class="r" style="left:842px;width:200px;text-align:right;top:385.25px;font-size:9.75px;color:#141414;">1</div><div class="r" style="left:888.2px;width:200px;text-align:right;top:385.25px;font-size:9.75px;color:#141414;">0.08h</div><div class="r" style="left:934px;width:200px;text-align:right;top:385.25px;font-size:9.75px;color:#141414;">11%</div><div class="r" style="left:980px;width:200px;text-align:right;top:385.25px;font-size:9.75px;color:#141414;">42%</div><div class="r" style="left:1027.3px;width:200px;text-align:right;top:385.25px;font-size:9.75px;color:#141414;">47%</div><div class="r" style="left:1073.3px;width:200px;text-align:right;top:385.25px;font-size:9.75px;color:#141414;">0%</div><div class="r" style="left:842px;width:200px;text-align:right;top:398.05px;font-size:9.75px;color:#141414;">1</div><div class="r" style="left:888.2px;width:200px;text-align:right;top:398.05px;font-size:9.75px;color:#141414;">0.08h</div><div class="r" style="left:934px;width:200px;text-align:right;top:398.05px;font-size:9.75px;color:#141414;">11%</div><div class="r" style="left:980px;width:200px;text-align:right;top:398.05px;font-size:9.75px;color:#141414;">42%</div><div class="r" style="left:1027.3px;width:200px;text-align:right;top:398.05px;font-size:9.75px;color:#141414;">47%</div><div class="r" style="left:1073.3px;width:200px;text-align:right;top:398.05px;font-size:9.75px;color:#141414;">0%</div><div class="r" style="left:842px;width:200px;text-align:right;top:431.05px;font-size:9.75px;color:#141414;">1</div><div class="r" style="left:888.2px;width:200px;text-align:right;top:431.05px;font-size:9.75px;color:#141414;">0.25h</div><div class="r" style="left:934px;width:200px;text-align:right;top:431.05px;font-size:9.75px;color:#141414;">4%</div><div class="r" style="left:980px;width:200px;text-align:right;top:431.05px;font-size:9.75px;color:#141414;">95%</div><div class="r" style="left:1027.3px;width:200px;text-align:right;top:431.05px;font-size:9.75px;color:#141414;">1%</div><div class="r" style="left:1073.3px;width:200px;text-align:right;top:431.05px;font-size:9.75px;color:#141414;">0%</div><div class="r" style="left:842px;width:200px;text-align:right;top:443.95px;font-size:9.75px;color:#141414;">1</div><div class="r" style="left:888.2px;width:200px;text-align:right;top:443.95px;font-size:9.75px;color:#141414;">0.25h</div><div class="r" style="left:934px;width:200px;text-align:right;top:443.95px;font-size:9.75px;color:#141414;">4%</div><div class="r" style="left:980px;width:200px;text-align:right;top:443.95px;font-size:9.75px;color:#141414;">95%</div><div class="r" style="left:1027.3px;width:200px;text-align:right;top:443.95px;font-size:9.75px;color:#141414;">1%</div><div class="r" style="left:1073.3px;width:200px;text-align:right;top:443.95px;font-size:9.75px;color:#141414;">0%</div><div class="r" style="left:888.2px;width:200px;text-align:right;top:464.05px;font-size:9.75px;color:#141414;">0.33h</div><div class="r" style="left:934px;width:200px;text-align:right;top:464.05px;font-size:9.75px;color:#141414;">5%</div><div class="r" style="left:980px;width:200px;text-align:right;top:464.05px;font-size:9.75px;color:#141414;">83%</div><div class="r" style="left:1027.3px;width:200px;text-align:right;top:464.05px;font-size:9.75px;color:#141414;">12%</div><div class="r" style="left:1073.3px;width:200px;text-align:right;top:464.05px;font-size:9.75px;color:#141414;">0%</div><div class="a" style="left:581px;top:477px;width:696px;height:7px;background:#e4f8fc"></div><div class="a" style="left:581px;top:483px;width:696px;height:1px;background:#000"></div><div class="a" style="left:582px;top:484px;width:694px;height:72px;background:#ccccff"></div><div class="a" style="left:663px;top:496px;width:613px;height:39px;background:#000"></div><div class="a" style="left:664px;top:497px;width:612px;height:37px;background:#fff"></div><div class="a" style="left:1045px;top:484px;width:1px;height:72px;background:#222"></div><div class="a" style="left:1091px;top:484px;width:1px;height:72px;background:#222"></div><div class="a" style="left:1137px;top:484px;width:1px;height:72px;background:#222"></div><div class="a" style="left:1183px;top:484px;width:1px;height:72px;background:#222"></div><div class="a" style="left:1230px;top:484px;width:1px;height:72px;background:#222"></div><div class="a" style="left:581px;top:484px;width:1px;height:72px;background:#000"></div><div class="a" style="left:1276px;top:484px;width:1px;height:72px;background:#000"></div><div class="a" style="left:581px;top:555px;width:696px;height:1px;background:#000"></div><div class="r" style="left:795px;top:510.65px;font-size:9.75px;color:#141414;">Periods without action</div><div class="r" style="left:669.6px;top:522.25px;font-size:9.75px;color:#141414;">Total</div><div class="r" style="left:586.2px;top:543.45px;font-size:9.75px;color:#141414;">Total</div><div class="r" style="left:842px;width:200px;text-align:right;top:510.45px;font-size:9.75px;color:#141414;">2</div><div class="r" style="left:888.2px;width:200px;text-align:right;top:510.45px;font-size:9.75px;color:#141414;">2074.27h</div><div class="r" style="left:934px;width:200px;text-align:right;top:510.45px;font-size:9.75px;color:#141414;">0%</div><div class="r" style="left:980px;width:200px;text-align:right;top:510.45px;font-size:9.75px;color:#141414;">0%</div><div class="r" style="left:1027.3px;width:200px;text-align:right;top:510.45px;font-size:9.75px;color:#141414;">0%</div><div class="r" style="left:1073.3px;width:200px;text-align:right;top:510.45px;font-size:9.75px;color:#141414;">100%</div><div class="r" style="left:842px;width:200px;text-align:right;top:522.35px;font-size:9.75px;color:#141414;">2</div><div class="r" style="left:888.2px;width:200px;text-align:right;top:522.35px;font-size:9.75px;color:#141414;">2074.27h</div><div class="r" style="left:934px;width:200px;text-align:right;top:522.35px;font-size:9.75px;color:#141414;">0%</div><div class="r" style="left:980px;width:200px;text-align:right;top:522.35px;font-size:9.75px;color:#141414;">0%</div><div class="r" style="left:1027.3px;width:200px;text-align:right;top:522.35px;font-size:9.75px;color:#141414;">0%</div><div class="r" style="left:1073.3px;width:200px;text-align:right;top:522.35px;font-size:9.75px;color:#141414;">100%</div><div class="r" style="left:888.2px;width:200px;text-align:right;top:543.45px;font-size:9.75px;color:#141414;">2074.27h</div><div class="r" style="left:934px;width:200px;text-align:right;top:543.45px;font-size:9.75px;color:#141414;">0%</div><div class="r" style="left:980px;width:200px;text-align:right;top:543.45px;font-size:9.75px;color:#141414;">0%</div><div class="r" style="left:1027.3px;width:200px;text-align:right;top:543.45px;font-size:9.75px;color:#141414;">0%</div><div class="r" style="left:1073.3px;width:200px;text-align:right;top:543.45px;font-size:9.75px;color:#141414;">100%</div><div class="a" style="left:581px;top:556px;width:696px;height:17px;background:#e4f8fc"></div><div class="r" style="left:581px;top:562.55px;font-size:9.75px;color:#141414;">Sum of Total Working Time</div><div class="r" style="left:888.2px;width:200px;text-align:right;top:563.25px;font-size:9.75px;color:#141414;">2074.60h</div><div class="r" style="left:934px;width:200px;text-align:right;top:563.25px;font-size:9.75px;color:#141414;">0%</div><div class="r" style="left:980px;width:200px;text-align:right;top:563.25px;font-size:9.75px;color:#141414;">0%</div><div class="r" style="left:1027.3px;width:200px;text-align:right;top:563.25px;font-size:9.75px;color:#141414;">0%</div><div class="r" style="left:1073.3px;width:200px;text-align:right;top:563.25px;font-size:9.75px;color:#141414;">100%</div><div class="a" style="left:581px;top:697px;width:696px;height:1px;background:#222"></div><div class="r" style="left:1074.3px;width:200px;text-align:right;top:708.72px;font-size:9.9px;color:#141414;">Page 1</div>
<svg style="left:0;top:0" width="1425" height="837">
<rect x="10.8" y="82.6" width="85.8" height="20.6" rx="5" ry="5" fill="none" stroke="#f21212" stroke-width="2.8"/>
<rect x="272" y="152" width="238" height="28.4" rx="6" ry="6" fill="none" stroke="#f21212" stroke-width="2.5"/>
<rect x="791.5" y="276.3" width="208.2" height="295" rx="5" ry="5" fill="none" stroke="#f21212" stroke-width="2.2"/>
<path d="M511 168 L560 185.8 L700 236.4 L754.4 256 L754.4 253 L774.1 273.6 L745.6 274.8 L749.8 270.2 L700 249.2 L560 191.2 L511 170.5 Z" fill="#ff0000"/>
</svg>
</body></html>
